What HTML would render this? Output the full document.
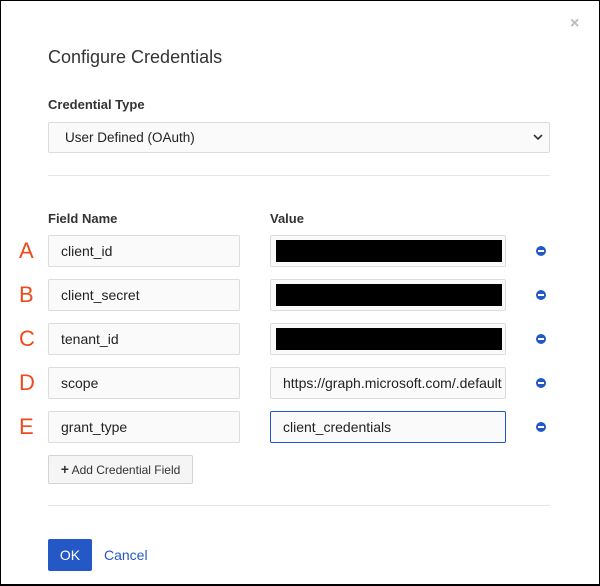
<!DOCTYPE html>
<html><head><style>
body{margin:0;width:600px;height:586px;overflow:hidden;font-family:"Liberation Sans",sans-serif;background:#fff}
.frame{position:absolute;left:0;top:0;width:598px;height:583px;border:1px solid #000;border-bottom-width:2px}
.a{position:absolute}
.in{position:absolute;box-sizing:border-box;height:32px;border:1px solid #d9dde0;background:#fafafa;border-radius:2px;font-size:14px;color:#222;padding-left:12px;line-height:30px;white-space:nowrap;overflow:hidden}
.blk{position:absolute;background:#000;left:5px;top:4px;right:3px;bottom:4px}
.lt{position:absolute;left:19px;font-size:22px;color:#f04a1c;width:20px}
.m{position:absolute;left:536px;width:10px;height:10px;border-radius:50%;background:#2458c6}
.m:after{content:"";position:absolute;left:2px;top:4px;width:6px;height:2px;background:#fff}
</style></head><body>
<div class="frame"></div>
<div class="a" style="left:570px;top:15px;font-size:16px;color:#bbb;font-weight:bold">×</div>
<div class="a" style="left:48px;top:47px;font-size:18px;color:#333">Configure Credentials</div>
<div class="a" style="left:48px;top:97px;font-size:13px;font-weight:bold;color:#333">Credential Type</div>
<div class="in" style="left:48px;top:122px;width:502px;height:31px;line-height:29px;font-size:13.5px;padding-left:16px">User Defined (OAuth)
<svg class="a" style="right:6px;top:11px" width="10" height="7" viewBox="0 0 10 7"><path d="M1 1l4 4 4-4" stroke="#333" stroke-width="1.6" fill="none"/></svg></div>
<div class="a" style="left:48px;top:175px;width:502px;height:1px;background:#e5e5e5"></div>
<div class="a" style="left:48px;top:211px;font-size:13px;font-weight:bold;color:#333">Field Name</div>
<div class="a" style="left:270px;top:211px;font-size:13px;font-weight:bold;color:#333">Value</div>

<div class="lt" style="top:238px">A</div>
<div class="in" style="left:48px;top:235px;width:192px">client_id</div>
<div class="in" style="left:270px;top:235px;width:236px"><div class="blk"></div></div>
<div class="m" style="top:246px"></div>

<div class="lt" style="top:282px">B</div>
<div class="in" style="left:48px;top:279px;width:192px">client_secret</div>
<div class="in" style="left:270px;top:279px;width:236px"><div class="blk"></div></div>
<div class="m" style="top:290px"></div>

<div class="lt" style="top:326px">C</div>
<div class="in" style="left:48px;top:323px;width:192px">tenant_id</div>
<div class="in" style="left:270px;top:323px;width:236px"><div class="blk"></div></div>
<div class="m" style="top:334px"></div>

<div class="lt" style="top:370px">D</div>
<div class="in" style="left:48px;top:367px;width:192px">scope</div>
<div class="in" style="left:270px;top:367px;width:236px"><div style="width:220px;overflow:hidden">https://graph.microsoft.com/.default</div></div>
<div class="m" style="top:378px"></div>

<div class="lt" style="top:414px">E</div>
<div class="in" style="left:48px;top:411px;width:192px">grant_type</div>
<div class="in" style="left:270px;top:411px;width:236px;border-color:#2458c6">client_credentials</div>
<div class="m" style="top:422px"></div>

<div class="a" style="left:48px;top:455px;width:143px;height:27px;border:1px solid #d4d4d4;background:#f5f5f5;border-radius:2px;font-size:12px;color:#333;line-height:27px;text-align:center"><b style="font-size:14px">+</b> Add Credential Field</div>
<div class="a" style="left:48px;top:505px;width:502px;height:1px;background:#e5e5e5"></div>
<div class="a" style="left:48px;top:539px;width:44px;height:32px;background:#2458c6;border-radius:2px;color:#fff;font-size:14px;line-height:32px;text-align:center">OK</div>
<div class="a" style="left:104px;top:547px;font-size:14px;color:#2458c6">Cancel</div>
</body></html>
